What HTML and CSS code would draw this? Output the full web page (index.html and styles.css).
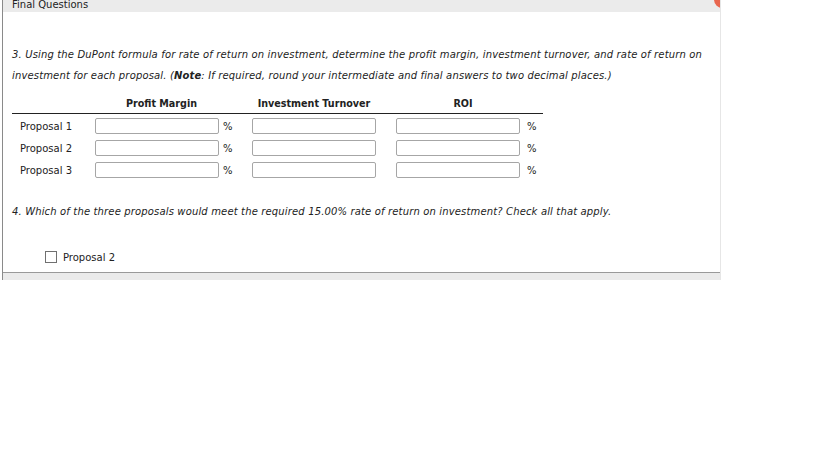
FILE: index.html
```html
<!DOCTYPE html>
<html lang="en">
<head>
    <meta charset="UTF-8">
    <title>Final Questions</title>
    <link rel="stylesheet" href="styles.css">
</head>
<body>
    <div class="panel">
        <div class="panel-head">Final Questions</div>
        <span class="close-dot"></span>

        <div class="panel-body">
            <p class="question">3. Using the DuPont formula for rate of return on investment, determine the profit margin, investment turnover, and rate of return on investment for each proposal. (<b>Note</b>: If required, round your intermediate and final answers to two decimal places.)</p>

            <div class="answer-grid">
                <div class="head-row">
                    <div></div>
                    <div class="col-head pm">Profit Margin</div>
                    <div></div>
                    <div class="col-head it">Investment Turnover</div>
                    <div class="col-head roi">ROI</div>
                    <div></div>
                </div>
                <div class="row">
                    <div class="label">Proposal 1</div>
                    <div><input type="text" class="box"></div>
                    <div class="unit">%</div>
                    <div><input type="text" class="box"></div>
                    <div><input type="text" class="box"></div>
                    <div class="unit roi-unit">%</div>
                </div>
                <div class="row">
                    <div class="label">Proposal 2</div>
                    <div><input type="text" class="box"></div>
                    <div class="unit">%</div>
                    <div><input type="text" class="box"></div>
                    <div><input type="text" class="box"></div>
                    <div class="unit roi-unit">%</div>
                </div>
                <div class="row">
                    <div class="label">Proposal 3</div>
                    <div><input type="text" class="box"></div>
                    <div class="unit">%</div>
                    <div><input type="text" class="box"></div>
                    <div><input type="text" class="box"></div>
                    <div class="unit roi-unit">%</div>
                </div>
            </div>

            <p class="question q4">4. Which of the three proposals would meet the required 15.00% rate of return on investment? Check all that apply.</p>

            <label class="check">
                <input type="checkbox">
                <span>Proposal 2</span>
            </label>
        </div>

        <div class="panel-foot"></div>
    </div>
</body>
</html>
```

FILE: styles.css
```css
* {
    margin: 0;
    padding: 0;
    box-sizing: border-box;
}

body {
    font-family: 'DejaVu Sans', Verdana, sans-serif;
    font-size: 10px;
    color: #222;
    background: #fff;
}

.panel {
    position: relative;
    overflow: hidden;
    width: 719px;
    margin-left: 2px;
    border-left: 1px solid #8a8a8a;
    border-right: 1px solid #e6e6e6;
}

.panel-head {
    height: 12px;
    line-height: 10px;
    padding-left: 9px;
    background: #ebebeb;
    color: #222;
}

.close-dot {
    position: absolute;
    top: -9px;
    right: -11px;
    width: 17px;
    height: 17px;
    border-radius: 50%;
    background: #e8664f;
}

.panel-body {
    padding: 32px 0 9px 9px;
}

.question {
    font-style: italic;
    line-height: 21px;
    width: 705px;
    font-size: 10px;
    letter-spacing: 0.15px;
}

.question b {
    font-weight: bold;
}

.answer-grid {
    width: 531px;
    margin-top: 10px;
}

.head-row,
.row {
    display: grid;
    grid-template-columns: 83px 127px 30px 144px 122px 25px;
    align-items: center;
}

.head-row {
    height: 18px;
    padding-bottom: 2px;
    margin-bottom: 1px;
    border-bottom: 1px solid #222;
}

.col-head {
    font-weight: bold;
    font-size: 9.6px;
}

.pm {
    text-align: center;
    padding-left: 6px;
}

.it {
    width: 124px;
    text-align: center;
}

.roi {
    text-align: center;
    padding-left: 12px;
}

.row {
    height: 22px;
}

.label {
    padding-left: 8px;
}

.box {
    display: block;
    width: 124px;
    height: 16px;
    border: 1px solid #a6a6a6;
    border-radius: 2px;
    background: #fff;
    font-family: inherit;
    font-size: 10px;
}

.unit {
    padding-left: 1px;
}

.roi-unit {
    padding-left: 9px;
}

.q4 {
    margin-top: 20px;
}

.check {
    display: flex;
    align-items: center;
    gap: 6px;
    margin: 29px 0 0 33px;
}

.check input {
    appearance: none;
    width: 12px;
    height: 12px;
    border: 1px solid #707070;
    background: #fff;
}

.panel-foot {
    height: 8px;
    border-top: 1px solid #9a9a9a;
    background: #ebebeb;
}
```
